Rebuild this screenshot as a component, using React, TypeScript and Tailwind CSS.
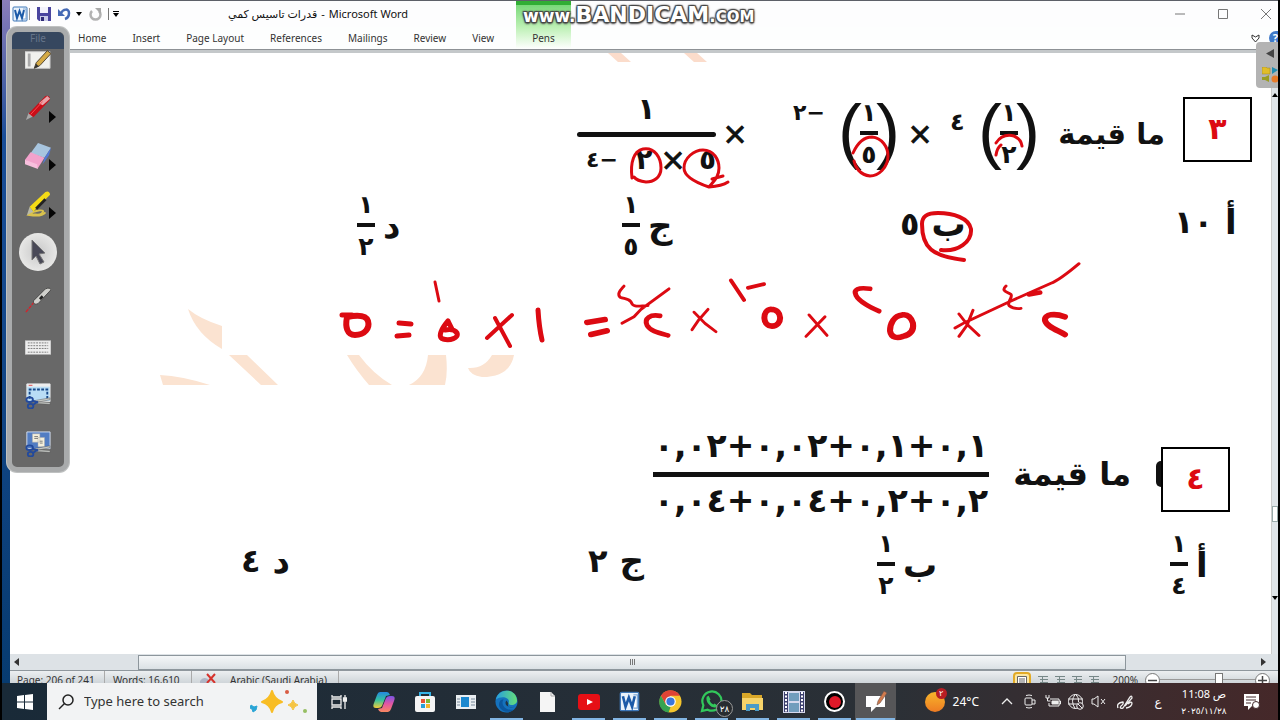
import React from "react";

const docFont = "font-['DejaVu_Sans',sans-serif]";
const uiFont = "font-['Noto_Sans','DejaVu_Sans',sans-serif]";

function Fraction({ top, bottom }: { top: string; bottom: string }) {
  return (
    <span className="flex w-[18px] flex-col items-center">
      <span className="h-[24px] text-[25px] leading-[24px]">{top}</span>
      <span className="mb-[8px] mt-[6px] h-1 w-[18px] bg-[#111]" />
      <span className="h-[24px] text-[25px] leading-[24px]">{bottom}</span>
    </span>
  );
}

function Paren({ top, bottom }: { top: string; bottom: string }) {
  return (
    <span className="flex w-[54px] items-center justify-between">
      <span className="mb-2 w-[18px] font-['Liberation_Sans',sans-serif] text-[72px] font-normal leading-[72px]">
        <span className="-ml-1">(</span>
      </span>
      <Fraction top={top} bottom={bottom} />
      <span className="mb-2 flex w-[18px] justify-end font-['Liberation_Sans',sans-serif] text-[72px] font-normal leading-[72px]">
        <span className="-mr-1">)</span>
      </span>
    </span>
  );
}

function Times() {
  return <span className="flex w-[20px] justify-center text-[30px] font-normal leading-[30px] [-webkit-text-stroke:1px_#111]">×</span>;
}

function Letter({ children }: { children: string }) {
  return <span className="text-[34px] leading-[40px]">{children}</span>;
}

function NumberBox({ children }: { children: string }) {
  return (
    <span className="flex h-[65px] w-[69px] items-center justify-center border-2 border-black bg-white text-[30px] font-bold leading-[30px] text-[#dc0a12]">
      {children}
    </span>
  );
}

function Watermark() {
  return (
    <svg className="absolute left-0 top-0" width="1260" height="600" viewBox="10 53 1260 600" fill="#fbe3d1" aria-hidden="true">
      <path d="M608 53h13l10 9h-13zM684 53h13l10 9h-13z" fill="#fbdccb" />
      <path d="M188 309q12 10 34 17v23q-26-15-34-40z" />
      <path d="M229 355h18l31 30h-17zM160 375q22 1 50 10h-47zM347 355h12q14 19 33 30h-23q-13-15-22-30zM428 355h18q2 18-1 30h-36q17-8 19-30zM492 355h22q-4 22-32 22-12-2-14-9 16 1 24-13z" />
    </svg>
  );
}

function Ink() {
  return (
    <svg
      className="absolute left-0 top-0"
      width="1260"
      height="600"
      viewBox="10 53 1260 600"
      fill="none"
      stroke="#dc0a12"
      strokeWidth="3"
      strokeLinecap="round"
      strokeLinejoin="round"
      aria-hidden="true"
    >
      <path d="M632 178C630 162 634 151 643 149C655 147 661 158 661 168C661 178 653 182 646 182Q637 181 634 177" />
      <path d="M709 187C697 183 684 177 684 168C684 158 694 150 703 150C714 150 719 160 719 168C719 177 714 181 709 187Q722 186 728 182M712 179L723 176" />
      <path d="M853 153C858 142 865 137 872 137C882 138 888 147 888 156C888 168 878 176 870 176C860 175 855 167 854 161" />
      <path d="M996 143C1002 134 1010 135 1014 136Q1021 139 1022 146M1001 145Q997 148 996 155" />
      <path strokeWidth="4" d="M941 250C958 252 972 242 971 229C969 218 953 213 938 213C927 213 922 216 922 224C922 248 932 256 964 260" />
      <path strokeWidth="5" d="M342 315L352 315M399 323L411 324M397 336L409 335M448 321C442 328 437 337 443 339C450 341 459 338 457 333C455 330 450 329 445 330M448 321L452 329M538 310Q539 327 542 340" />
      <path strokeWidth="6" d="M347 317C345 327 347 335 355 335C365 335 370 328 368 321C366 315 357 315 347 317" />
      <path d="M435 282L439 301" />
      <path strokeWidth="4" d="M512 315L487 338M495 318L510 346" />
      <g transform="translate(0 17.3) scale(1 .933)">
        <path strokeWidth="6" d="M587 327L605 324M591 340L607 336" />
        <path strokeWidth="5" d="M660 320C650 318 644 323 647 330C650 336 658 338 668 341" />
        <path d="M622 328L634 321L641 313L669 291M624 288C620 293 617 296 620 300C624 302 628 301 631 305C633 312 640 309 648 309" />
        <path d="M708 313L699 324L692 335M694 316L705 328L716 337" />
        <path strokeWidth="4" d="M731 282L744 303M748 290L764 286" />
        <path strokeWidth="6" d="M771 313C762 314 762 331 772 331C783 331 783 313 771 313" />
        <path d="M825 321L806 342M809 319L827 341" />
        <path strokeWidth="5" d="M870 291C858 289 853 292 856 298C859 305 871 311 879 315" />
        <path strokeWidth="6" d="M902 319C894 320 890 328 890 336C891 344 898 344 903 342C911 340 914 335 913 328C911 321 907 318 902 319" />
        <path d="M955 333L965 327L1011 304L1051 285Q1059 282 1079 264M959 318L967 329L979 341M973 314L967 330L959 342M1006 288C1001 293 1006 294 1011 297C1013 301 1007 304 1009 309Q1014 313 1021 312" />
        <path strokeWidth="5" d="M1029 297L1040 295" />
        <path strokeWidth="6" d="M1065 321C1055 317 1044 318 1045 325C1047 332 1057 335 1065 340" />
      </g>
    </svg>
  );
}

function DocumentPage() {
  return (
    <main className={`relative min-w-0 flex-1 overflow-hidden bg-white font-bold text-[#111] ${docFont}`}>
      <Watermark />
      <div className="relative flex w-max flex-col pt-[34px]" dir="ltr">
        <section className="flex h-[94px] items-center pl-[567px]">
          <span className="flex w-[139px] flex-col items-center">
            <span className="h-[30px] text-[30px] leading-[30px]">١</span>
            <span className="my-[8px] h-[5px] w-full rounded-sm bg-[#111]" />
            <span className="flex h-[30px] w-full items-center pl-[9px] leading-[30px]">
              <span className="flex w-[46px] items-center text-[22px]">
                <bdo dir="ltr">٤−</bdo>
              </span>
              <span className="mr-[7px] flex w-[24px] justify-center text-[28px]">٢</span>
              <Times />
              <span className="flex w-[33px] justify-end text-[28px]">٥</span>
            </span>
          </span>
          <span className="ml-[9px]"><Times /></span>
          <bdo dir="ltr" className="mb-[42px] ml-[48px] w-[34px] text-[22px] leading-[22px]">٢−</bdo>
          <span className="ml-[15px]"><Paren top="١" bottom="٥" /></span>
          <span className="ml-[14px]"><Times /></span>
          <span className="mb-[24px] ml-[20px] w-[18px] text-[24px] leading-[22px]">٤</span>
          <span className="ml-[14px]"><Paren top="١" bottom="٢" /></span>
          <span className="ml-[24px] w-[105px] whitespace-nowrap text-[29px] leading-[40px]" dir="rtl">ما قيمة</span>
          <span className="mb-[10px] ml-[18px]"><NumberBox>٣</NumberBox></span>
        </section>

        <section className="flex h-[90px] items-center pl-[347px] text-[32px] leading-[40px]">
          <span className="flex w-[265px] items-center gap-2"><Fraction top="١" bottom="٢" /><Letter>د</Letter></span>
          <span className="flex w-[278px] items-center gap-2"><Fraction top="١" bottom="٥" /><Letter>ج</Letter></span>
          <span className="mb-1 flex w-[274px] items-center gap-3"><span>٥</span><Letter>ب</Letter></span>
          <span className="mb-2 flex items-center gap-3"><bdo dir="ltr">١٠</bdo><Letter>أ</Letter></span>
        </section>

        <section className="mt-[156px] flex h-[94px] items-center pl-[643px]">
          <span className="flex w-[336px] flex-col items-center">
            <bdo dir="ltr" className="h-[38px] whitespace-nowrap text-[33px] leading-[34px]">٠,٠٢+٠,٠٢+٠,١+٠,١</bdo>
            <span className="my-[5px] h-[5px] w-full bg-[#111]" />
            <bdo dir="ltr" className="h-[38px] whitespace-nowrap text-[33px] leading-[38px]">٠,٠٤+٠,٠٤+٠,٢+٠,٢</bdo>
          </span>
          <span className="ml-[26px] w-[116px] whitespace-nowrap text-[32px] leading-[40px]" dir="rtl">ما قيمة</span>
          <span className="ml-[25px] h-[26px] w-[5px] rounded-l-full bg-[#111]" />
          <span className="mt-[10px]"><NumberBox>٤</NumberBox></span>
        </section>

        <section className="flex h-[88px] items-center pl-[231px] text-[32px] leading-[40px]">
          <span className="mb-2 flex w-[347px] items-center gap-3"><span>٤</span><Letter>د</Letter></span>
          <span className="mb-2 flex w-[289px] items-center gap-3"><span>٢</span><Letter>ج</Letter></span>
          <span className="flex w-[293px] items-center gap-2"><Fraction top="١" bottom="٢" /><Letter>ب</Letter></span>
          <span className="flex items-center gap-2"><Fraction top="١" bottom="٤" /><Letter>أ</Letter></span>
        </section>
      </div>
      <Ink />
    </main>
  );
}

function WordBadge({ className }: { className: string }) {
  return (
    <svg className={className} viewBox="0 0 16 16" aria-hidden="true">
      <rect x="1" y="1" width="14" height="14" rx="1" fill="#e9f2fb" stroke="#3f78b8" />
      <path d="M11 3h3v10h-3" fill="#fff" stroke="#7fa8d5" />
      <path d="M3 4l2 8L7.500 5 10 12l2-8" fill="none" stroke="#1c5aa8" strokeWidth="2" />
    </svg>
  );
}

function TitleBar() {
  return (
    <header className="relative flex h-[27px] items-center border-t border-[#5d6068] bg-[#fdfdfe] pl-0.5 text-[11px] text-[#111]">
      <button aria-label="Word menu"><WordBadge className="size-4" /></button>
      <span className="ml-px h-3 w-px bg-[#999]" />
      <button aria-label="Save" className="ml-[7px]">
        <svg className="size-[14px]" viewBox="0 0 14 14"><path d="M0 0h14v14H2L0 12z" fill="#4a459f" /><path d="M3 0h8v6H3z" fill="#f2f2fb" /><path d="M3 9h8v5H3z" fill="#c9cbe8" /><path d="M4 10h3v4H4z" fill="#2f2b77" /></svg>
      </button>
      <button aria-label="Undo" className="ml-[7px]">
        <svg className="size-[14px]" viewBox="0 0 14 14" fill="none"><path d="M3 6C5 2 11 1 11 6c0 3-1 5-4 6" stroke="#4569b5" strokeWidth="2.500" /><path d="M0 2v7h7z" fill="#4569b5" /></svg>
      </button>
      <button aria-label="Undo list" className="ml-1"><svg className="h-1 w-[6px]" viewBox="0 0 6 4"><path d="M0 0h6L3 4z" /></svg></button>
      <button aria-label="Redo" className="ml-[7px]">
        <svg className="size-[13px]" viewBox="0 0 13 13" fill="none"><path d="M3 3a5 5 0 1 0 7 0" stroke="#b2b2b2" strokeWidth="2.500" /><path d="M6 0h6v6z" fill="#a8a8a8" /></svg>
      </button>
      <span className="ml-[6px] h-3 w-px bg-[#777]" />
      <button aria-label="Customize toolbar" className="ml-1"><svg className="h-[6px] w-[6px]" viewBox="0 0 6 6"><path d="M0 0h6v1H0zM0 2h6L3 6z" /></svg></button>
      <h1 className="ml-[109px] flex gap-1 whitespace-nowrap text-[11px] font-normal"><span dir="rtl">قدرات تاسيس كمي</span><span>-</span><span>Microsoft Word</span></h1>
      <div className="ml-auto flex items-center gap-[33px] pr-[7px] text-[#777]">
        <button aria-label="Minimize"><svg className="size-[10px]" viewBox="0 0 10 10"><path d="M0 5h10" stroke="currentColor" /></svg></button>
        <button aria-label="Maximize"><svg className="size-[10px]" viewBox="0 0 10 10"><path d="M.5.5h9v9h-9z" fill="none" stroke="currentColor" /></svg></button>
        <button aria-label="Close"><svg className="size-[10px]" viewBox="0 0 10 10"><path d="M0 0l10 10M10 0L0 10" stroke="currentColor" /></svg></button>
      </div>
    </header>
  );
}

const tabs = ["Home", "Insert", "Page Layout", "References", "Mailings", "Review", "View"];

function Ribbon() {
  return (
    <nav className="relative flex h-[26px] items-start border-b-[3px] border-[#c4c8ca] bg-[#fdfefe] pl-[55px] text-[10px] text-[#333] shadow-[inset_0_-1px_0_#8d9195]">
      {tabs.map((t) => (
        <button key={t} className="h-[22px] whitespace-nowrap px-[13px]">{t}</button>
      ))}
      <div className="absolute -top-[26px] left-[506px] h-[48px] w-[55px] border-t-4 border-[#31ae35] bg-gradient-to-b from-[#79d97a] via-[#bcf0b4] to-white" />
      <button className="absolute left-[506px] top-0 h-[22px] w-[55px]">Pens</button>
      <div className="ml-auto flex items-center gap-[9px] pt-1">
        <button aria-label="Collapse ribbon"><svg className="size-[9px]" viewBox="0 0 9 9"><path d="M1 1l3.500 2L8 1v3L4.500 8 1 4z" fill="none" stroke="#333" /></svg></button>
        <button aria-label="Help" className="flex h-[14px] w-[9px] items-center justify-end overflow-hidden rounded-l-full bg-[#3f79c9] text-[11px] font-bold text-white">?</button>
      </div>
    </nav>
  );
}

function Bandicam() {
  return (
    <div className="pointer-events-none absolute left-[523px] top-[3px] z-20 whitespace-nowrap font-['DejaVu_Sans',sans-serif] text-[17px] font-bold leading-[24px] text-white [text-shadow:-1px_-1px_1px_#444,1px_-1px_1px_#444,-1px_1px_1px_#444,1px_1px_1px_#444,0_2px_2px_#555,0_0_3px_#444]">
      www.<span className="text-[22px]">BANDICAM</span>.<span className="text-[15px]">COM</span>
    </div>
  );
}

const Arrow = () => (
  <svg className="absolute -right-1 bottom-0 h-[12px] w-[7px]" viewBox="0 0 7 12"><path d="M0 0l7 6-7 6z" fill="#050505" /></svg>
);

function ToolButton({ label, arrow, children }: { label: string; arrow?: boolean; children: React.ReactNode }) {
  return (
    <button aria-label={label} className="relative flex h-[30px] w-[28px] items-center justify-center">
      <svg className="size-[26px]" viewBox="0 0 28 28">{children}</svg>
      {arrow && <Arrow />}
    </button>
  );
}

const Scissors = () => (
  <g>
    <path d="M10 19l17-3v2l-15 3zM10 20l17 1v2l-16-1z" fill="#c9ccc8" stroke="#555" strokeWidth=".5" />
    <g fill="none" stroke="#234a9c" strokeWidth="2"><ellipse cx="5" cy="18" rx="3.500" ry="2.500" /><ellipse cx="6" cy="25" rx="3" ry="2.500" /><path d="M8 19l6 2M8 24l6-4" /></g>
  </g>
);

function Dock() {
  return (
    <aside className="absolute left-[7px] top-[27px] z-10 flex w-[62px] flex-col items-center gap-[18px] rounded-[10px] border-[5px] border-[#a9abac] bg-[#686868] pb-[8px] shadow-[0_0_0_1px_#bfc1c1]">
      <span className="-mb-[22px] h-[17px] w-full rounded-t-md bg-[#36475f] text-center text-[10px] leading-[13px] text-[#66758a]">File</span>
      <ToolButton label="Whiteboard"><path d="M0 5h27v18H0z" fill="#f1f1ee" stroke="#c4c4c4" /><path d="M3 7h3v14H3z" fill="#aaa" /><path d="M10 23l2-6L24 4l4 3-12 13z" fill="#d5aa45" stroke="#494030" /><path d="M10 23l2-5 3 3z" fill="#333" /></ToolButton>
      <ToolButton label="Pen" arrow><path d="M1 27l3-8 5 4z" fill="#aaa" /><path d="M4 20L22 1q5-1 5 4L9 24z" fill="#c90e18" /><path d="M15 9l9-8 3 3-8 7z" fill="#e7a5aa" /><path d="M6 21l13-14" stroke="#ff4c50" /></ToolButton>
      <ToolButton label="Eraser" arrow><path d="M6 11L14 0l14 5-7 11z" fill="#a8c5df" /><path d="M0 18l6-8 15 6-7 11z" fill="#f3a2cc" /><path d="M21 16l7-11-2 8-7 10z" fill="#5278d7" /><path d="M0 18l13 5 1 5L0 23z" fill="#f8bfdd" /></ToolButton>
      <ToolButton label="Highlighter" arrow><path d="M3 26c8-6 21-7 15-2-3 3-8 0-13 2 7 1 14 1 17-3" fill="none" stroke="#d9c24d" strokeWidth="2" /><path d="M2 26l3-9 4 5z" fill="#b8b8a8" /><path d="M5 17L22 1q4-2 5 3L9 22z" fill="#f5dc16" /><path d="M12 19L22 9" stroke="#222" strokeWidth="3" /></ToolButton>
      <button aria-label="Select" className="-my-[4px] flex size-[38px] shrink-0 items-center justify-center rounded-full bg-radial from-[#c9c9c9] to-[#f4f4f2]">
        <svg className="size-[26px]" viewBox="0 0 26 26"><path d="M7 1l13 13-6 1 5 8-4 2-4-8-4 4z" fill="#494957" stroke="#777" /></svg>
      </button>
      <ToolButton label="Laser pointer"><path d="M1 27l9-11" stroke="#d4232b" strokeWidth="1.500" strokeDasharray="4 1" /><path d="M9 15L22 2q5-2 6 1L14 18q-5 2-5-3z" fill="#d0d0cc" stroke="#444" /><path d="M15 12l3-3 2 2-3 3z" fill="#222" /></ToolButton>
      <ToolButton label="Keyboard"><path d="M0 6h28v15H0z" fill="#eee" stroke="#aaa" /><path d="M3 8.500h22M3 11.500h22M3 14.500h22M3 18.500h22" stroke="#777" strokeDasharray="2 1" /></ToolButton>
      <ToolButton label="Capture area"><path d="M2 1h25v19H2z" fill="#b9ddf5" stroke="#e8e8e8" /><path d="M2 1h25v3H2z" fill="#eee" /><path d="M4 2.500h4" stroke="#d44" /><path d="M5 17V7h19v10" fill="none" stroke="#174889" strokeWidth="2" strokeDasharray="3 1.500" /><Scissors /></ToolButton>
      <ToolButton label="Capture page"><path d="M2 1h25v18H2z" fill="#527dc3" stroke="#d8e2f2" /><path d="M8 3h8v9H8zM14 7h7v10h-7z" fill="#f4efdb" stroke="#aaa" strokeWidth=".5" /><path d="M10 6h4M10 8h4M16 11h3M16 13h3" stroke="#777" /><Scissors /></ToolButton>
    </aside>
  );
}

function SidePanel() {
  return (
    <aside className="absolute right-0.5 top-[42px] z-10 flex h-[46px] w-[22px] flex-col items-end gap-[9px] rounded-l bg-[#b3b3b3] pt-[7px]">
      <button aria-label="Expand panel" className="mr-1"><svg className="h-[9px] w-[8px]" viewBox="0 0 8 9"><path d="M8 0v9L0 4.500z" fill="#444" /></svg></button>
      <svg className="h-[16px] w-[16px]" viewBox="0 0 16 16" aria-hidden="true"><path d="M0 0h4l1 1h3v6H0z" fill="#e1bd28" stroke="#9a8426" strokeWidth=".5" /><path d="M10 0l6 3-6 4z" fill="#238db1" /><path d="M0 10h3l4-2v7l-4-2H0z" fill="#9a9d21" /><circle cx="13" cy="12" r="3.500" fill="#e77b2b" /></svg>
    </aside>
  );
}

function StatusBar() {
  return (
    <footer className="flex h-[13px] items-start overflow-hidden border-t border-[#8f979d] bg-gradient-to-b from-[#eceff1] to-[#cfd5d9] text-[10px] leading-[18px] text-[#333]">
      <span className="w-[95px] whitespace-nowrap border-r border-[#aaa] pl-[7px]">Page: 206 of 241</span>
      <span className="w-[87px] whitespace-nowrap border-r border-[#aaa] pl-[8px]">Words: 16,610</span>
      <svg className="ml-[8px] mt-[2px] h-[12px] w-[16px] shrink-0" viewBox="0 0 16 12"><path d="M0 8q3-5 8-2v6H0z" fill="#aeb5c5" /><path d="M7 1l8 9M15 1l-8 9" stroke="#d5322c" strokeWidth="2" /></svg>
      <span className="w-[123px] whitespace-nowrap border-r border-[#aaa] pl-[14px]">Arabic (Saudi Arabia)</span>
      <div className="ml-auto flex h-[16px] items-start pr-[8px]">
        <button aria-label="Print layout" className="mt-px flex h-[16px] w-[18px] justify-center rounded-sm border-2 border-[#e2aa26] bg-[#fbe7a4] pt-0.5"><svg className="h-[9px] w-[10px]" viewBox="0 0 10 9"><path d="M.5.5h9v9h-9zM2 3h6M2 5h6M2 7h6" fill="#fff" stroke="#666" /></svg></button>
        {["Reading view", "Web layout", "Outline", "Draft"].map((l) => (
          <button key={l} aria-label={l} className="ml-[7px] mt-[5px]"><svg className="size-[10px]" viewBox="0 0 10 10"><path d="M0 .5h10M2 3.500h8M2 6.500h8M4.500 0v9" stroke="#788" /></svg></button>
        ))}
        <span className="ml-[14px]">200%</span>
        <button aria-label="Zoom out" className="ml-[7px] mt-[2px] flex size-[15px] items-center justify-center rounded-full border border-[#777] bg-white"><svg className="size-[9px]" viewBox="0 0 9 9"><path d="M0 4.500h9" stroke="#444" strokeWidth="1.500" /></svg></button>
        <span className="mt-[8px] flex h-px w-[95px] bg-[#999]"><span className="ml-[55px] -mt-1.5 h-3 w-[8px] border border-[#777] bg-white" /></span>
        <button aria-label="Zoom in" className="mt-[2px] flex size-[15px] items-center justify-center rounded-full border border-[#777] bg-white"><svg className="size-[9px]" viewBox="0 0 9 9"><path d="M0 4.500h9M4.500 0v9" stroke="#444" strokeWidth="1.500" /></svg></button>
      </div>
    </footer>
  );
}

function TaskButton({ label, open, active, children }: { label: string; open?: boolean; active?: boolean; children: React.ReactNode }) {
  return (
    <button aria-label={label} className={`relative flex h-full w-[41px] shrink-0 items-center justify-center ${active ? "bg-[#565658]" : ""}`}>
      {children}
      {open && <span className={`absolute bottom-0 h-0.5 bg-[#82b5e3] ${active ? "w-[39px]" : "w-[33px]"}`} />}
    </button>
  );
}

function Taskbar() {
  return (
    <div className="flex h-[37px] shrink-0 items-center bg-gradient-to-r from-[#192a38] via-[#2b3036] via-70% to-[#452829] text-white">
      <button aria-label="Start" className="flex h-full w-[45px] items-center justify-center">
        <svg className="size-[16px]" viewBox="0 0 16 16"><path d="M0 2l7-1v6.500H0zM8 1l8-1v7.500H8zM0 8.500h7V15l-7-1zM8 8.500h8V16l-8-1z" fill="#fff" /></svg>
      </button>
      <label className="flex h-full w-[270px] items-center bg-[#f2f3f4] pl-[11px] text-[#222]">
        <svg className="size-[16px] shrink-0" viewBox="0 0 16 16" fill="none" stroke="#222" strokeWidth="1.500"><circle cx="10" cy="6" r="5" /><path d="M6.500 9.500L1 15" /></svg>
        <input aria-label="Search" placeholder="Type here to search" className="ml-[10px] w-[160px] bg-transparent text-[13px] placeholder:text-[#333] outline-none" />
        <svg className="ml-[6px] h-[26px] w-[60px]" viewBox="0 0 60 26"><path d="M22 2q2 8 10 11-8 2-10 10-2-8-10-10 8-3 10-11z" fill="#f8bd25" stroke="#f8bd25" strokeLinejoin="round" strokeWidth="2" /><path d="M43 11q1 4 5 5-4 1-5 5-1-4-5-5 4-1 5-5z" fill="#f5c443" stroke="#f5c443" strokeLinejoin="round" /><path d="M1 16l3 2 3-1-1 4-3 2-1-3-2-1z" fill="#2ba5d6" stroke="#2ba5d6" /><circle cx="37" cy="3" r="2" fill="#d85c43" /><circle cx="55" cy="22" r="2" fill="#97bf63" /></svg>
      </label>
      <button aria-label="Task view" className="mr-0.5 flex h-full w-[44px] items-center justify-center"><svg className="size-[16px]" viewBox="0 0 16 16" fill="none" stroke="#eee" strokeWidth="1.300"><path d="M1 1v2h9V1M1 15v-2h9v2M1 5h9v6H1zM14 1v14" /><path d="M12.500 4h3v3h-3z" fill="#eee" /></svg></button>
      <TaskButton label="Copilot">
        <svg className="size-[22px]" viewBox="0 0 22 22"><defs><linearGradient id="ca" x2="0" y2="1"><stop stopColor="#2488df" /><stop offset=".5" stopColor="#34c2a0" /><stop offset="1" stopColor="#f4cb38" /></linearGradient><linearGradient id="cb" x2="0" y2="1"><stop stopColor="#7a55e6" /><stop offset=".5" stopColor="#e456a2" /><stop offset="1" stopColor="#f78860" /></linearGradient></defs><path d="M7 1h7q2 0 3 3l-4 1-4 10q-1 2-4 2H3q-4 0-2-5l3-8q1-3 3-3z" fill="url(#ca)" /><path d="M15 21H8q-2 0-3-3l4-1 4-10q1-2 4-2h2q4 0 2 5l-3 8q-1 3-3 3z" fill="url(#cb)" /></svg>
      </TaskButton>
      <TaskButton label="Store"><svg className="size-[22px]" viewBox="0 0 22 22"><path d="M6 6V2h10v4" fill="none" stroke="#35b4e8" strokeWidth="2" /><rect x="1" y="5" width="20" height="16" rx="2" fill="#f5f5f5" /><path d="M7 8h4v4H7z" fill="#e65336" /><path d="M12 8h4v4h-4z" fill="#7cb937" /><path d="M7 13h4v4H7z" fill="#279fda" /><path d="M12 13h4v4h-4z" fill="#f4b52b" /></svg></TaskButton>
      <TaskButton label="News"><svg className="size-[20px]" viewBox="0 0 20 20"><path d="M0 3h20v14H0z" fill="#e9eef1" /><path d="M5 5h8v10H5z" fill="#1b88cf" /><path d="M1 7h3M1 10h3M1 13h3M15 7h4M15 10h4M15 13h4" stroke="#789" /></svg></TaskButton>
      <TaskButton label="Edge" open><svg className="size-[23px]" viewBox="0 0 24 24"><defs><linearGradient id="eg"><stop stopColor="#279ee0" /><stop offset="1" stopColor="#65df78" /></linearGradient></defs><circle cx="12" cy="12" r="11.500" fill="#1572bd" /><path d="M1 10C3-2 22-3 23 11c0 5-7 6-9 3 3-6-7-9-13-4z" fill="url(#eg)" /><path d="M9 10c-4 5 3 13 11 10-8 7-19-1-15-8 1-2 3-2 4-2z" fill="#0b579e" /><path d="M12 11c-4 5 4 9 9 6-5 3-9 0-7-3z" fill="#203545" /></svg></TaskButton>
      <TaskButton label="File"><svg className="h-[20px] w-[15px]" viewBox="0 0 15 20"><path d="M0 0h11l4 4v16H0z" fill="#f5f5f5" /><path d="M11 0v4h4" fill="none" stroke="#aaa" /></svg></TaskButton>
      <TaskButton label="YouTube" open><svg className="h-[16px] w-[22px]" viewBox="0 0 22 16"><rect width="22" height="16" rx="3" fill="#e60f15" /><path d="M9 5l6 3-6 3z" fill="#fff" /></svg></TaskButton>
      <TaskButton label="Word" open><WordBadge className="size-[21px]" /></TaskButton>
      <TaskButton label="Chrome" open><svg className="size-[23px]" viewBox="0 0 24 24"><circle cx="12" cy="12" r="11.500" fill="#f5c52d" /><path d="M2 6C7-2 18-1 22 6H12L7 15z" fill="#df4436" /><path d="M2 6l5 9 5 3-2 5.500C1 22-2 13 2 6z" fill="#36a351" /><circle cx="12" cy="12" r="5.500" fill="#fff" /><circle cx="12" cy="12" r="4.300" fill="#3976dc" /></svg></TaskButton>
      <TaskButton label="WhatsApp" open>
        <svg className="size-[23px]" viewBox="0 0 24 24" fill="none"><path d="M2 22l1.500-6A10 10 0 1 1 8 20.500z" stroke="#32c85b" strokeWidth="2.300" /><path d="M7 7l2-1 2 4-1 1q1 3 4 4l1-1 3 2-1 2c-4 2-12-5-10-11z" fill="#32c85b" /></svg>
        <span className="absolute bottom-[3px] right-[-1px] flex size-[17px] items-center justify-center rounded-full border border-[#999] bg-[#282c30] text-[9px]">٢٨</span>
      </TaskButton>
      <TaskButton label="File Explorer" open><svg className="h-[18px] w-[21px]" viewBox="0 0 21 18"><path d="M0 0h8l2 2h10v15H0z" fill="#d9a728" /><path d="M0 5h21v12H0z" fill="#f6d36a" /><path d="M4 18v-7h13v7h-4v-3H8v3z" fill="#4c9bc7" /></svg></TaskButton>
      <TaskButton label="Video" open><svg className="size-[22px]" viewBox="0 0 22 22"><path d="M0 0h22v22H0z" fill="#d6d9ee" /><path d="M1 1h4v20H1zM17 1h4v20h-4z" fill="#3b3f6e" /><path d="M3 1v21M19 1v21" stroke="#fff" strokeWidth="2" strokeDasharray="2 1.500" /><path d="M6 2h10v8H6zM6 12h10v9H6z" fill="#719dbd" /></svg></TaskButton>
      <TaskButton label="Recorder" open><span className="flex size-[21px] items-center justify-center rounded-full border-2 border-white bg-black"><span className="size-[12px] rounded-full bg-[#df1828]" /></span></TaskButton>
      <TaskButton label="Pen board" open active><svg className="size-[22px]" viewBox="0 0 22 22"><path d="M1 5h19v11h-9l-5 5v-5H1z" fill="#fff" /><path d="M12 14l1-4L19 0l3 2-7 10z" fill="#d17b4d" stroke="#6d5146" strokeWidth=".6" /></svg></TaskButton>

      <div className="ml-auto flex h-full items-center">
        <button className="flex items-center gap-[8px] text-[12px]">
          <span className="relative size-[20px] rounded-full bg-gradient-to-b from-[#f7b52b] to-[#ed7b23]"><span className="absolute -right-0.5 -top-1 flex size-[11px] items-center justify-center rounded-full bg-[#b71e24] text-[8px]">٢</span></span>
          24°C
        </button>
        <button aria-label="Hidden icons" className="ml-[22px]"><svg className="h-[7px] w-[12px]" viewBox="0 0 12 7"><path d="M1 6l5-5 5 5" fill="none" stroke="#eee" strokeWidth="1.300" /></svg></button>
        <div className="ml-[10px] flex items-center gap-[7px]">
          <svg className="size-[15px]" viewBox="0 0 15 15" fill="none" stroke="#eee"><rect x="2" y="4" width="7" height="7" rx="1" /><path d="M9 6h3v4H9M3 1.500q3-1 6 0M3 13.500q3 1 6 0" /></svg>
          <svg className="h-[14px] w-[16px]" viewBox="0 0 16 14" fill="none" stroke="#eee"><path d="M5 4h9v7H4V8M14 6h1.500v3H14M1 0v3h3V0M2.500 3v3h3" /><path d="M7 6h6v3H7z" fill="#eee" /></svg>
          <svg className="size-[16px]" viewBox="0 0 16 16" fill="none" stroke="#eee"><circle cx="7.500" cy="7.500" r="7" /><path d="M0 5h15M0 10h9M7.500 0q-6 7 0 15M7.500 0q4 4 3 8" /><circle cx="12" cy="12" r="3.300" fill="#3b2d32" /><path d="M10 10l4 4" /></svg>
          <svg className="h-[13px] w-[15px]" viewBox="0 0 15 13" fill="none" stroke="#eee"><path d="M1 4h2l4-3v11L3 9H1zM10 4l4 5M14 4l-4 5" /></svg>
        </div>
        <svg className="ml-[11px] size-[16px]" viewBox="0 0 16 16" fill="none" stroke="#eee" strokeWidth="1.300" aria-hidden="true"><path d="M1 14Q-1 9 6 8q1 2-2 4-2 3 2 2l7-11q2-2 2 1L8 12M9 14q6-1 6-5-1-2-4 1" /></svg>
        <button className="ml-[20px] w-[10px] text-[12px]">ع</button>
        <time className="ml-[16px] flex w-[50px] flex-col items-center text-[11px] leading-[17px]"><span className="whitespace-nowrap">11:08 ص</span><bdo dir="ltr" className="whitespace-nowrap text-[9px]">٢٠٢٥/١١/٢٨</bdo></time>
        <button aria-label="Notifications" className="ml-[14px] mr-[17px]"><svg className="size-[18px]" viewBox="0 0 18 18"><path d="M1 1h15v12H9l-4 4v-4H1z" fill="#fff" /><path d="M3 4h10M3 7h10M3 10h5" stroke="#42292b" /><circle cx="13" cy="12" r="3.500" fill="#fff" stroke="#42292b" /></svg></button>
      </div>
    </div>
  );
}

export default function App() {
  return (
    <div className={`flex h-screen w-full flex-col overflow-hidden bg-black px-0.5 ${uiFont}`}>
      <div className="relative -mx-0.5 flex min-h-0 flex-1 px-0.5">
        <div className="w-2 shrink-0 bg-gradient-to-b from-[#8a7dbb] via-[#194e98] via-20% to-[#073b70]" />
        <div className="flex min-w-0 flex-1 flex-col bg-white">
          <TitleBar />
          <Ribbon />
          <div className="flex min-h-0 flex-1">
            <DocumentPage />
            <div aria-label="Vertical scroll" className="flex w-[7px] flex-col items-center border-l border-[#ccc] bg-[#dfe4e8] pt-[40px]">
              <svg className="h-1 w-[6px]" viewBox="0 0 6 4"><path d="M0 4h6L3 0z" /></svg>
              <span className="mt-auto h-[16px] w-full shrink-0 border border-[#9aa] bg-white" />
              <svg className="mb-[54px] mt-[74px] h-1 w-[6px] shrink-0" viewBox="0 0 6 4"><path d="M0 0h6L3 4z" /></svg>
            </div>
          </div>
          <div className="flex h-[16px] shrink-0 items-center bg-[#dde2e6] px-1">
            <svg className="h-[8px] w-[5px]" viewBox="0 0 5 8"><path d="M5 0v8L0 4z" fill="#333" /></svg>
            <div className="ml-[119px] mr-[135px] flex h-[15px] flex-1 items-center justify-center gap-px border border-[#8d969c] bg-gradient-to-b from-[#f5f7f8] to-[#dbe1e5]">
              <span className="h-[6px] w-px bg-[#777]" /><span className="h-[6px] w-px bg-[#777]" /><span className="h-[6px] w-px bg-[#777]" />
            </div>
            <svg className="mr-2 h-[8px] w-[5px]" viewBox="0 0 5 8"><path d="M0 0v8l5-4z" fill="#333" /></svg>
          </div>
          <StatusBar />
        </div>
        <Dock />
        <SidePanel />
        <Bandicam />
      </div>
      <Taskbar />
    </div>
  );
}
